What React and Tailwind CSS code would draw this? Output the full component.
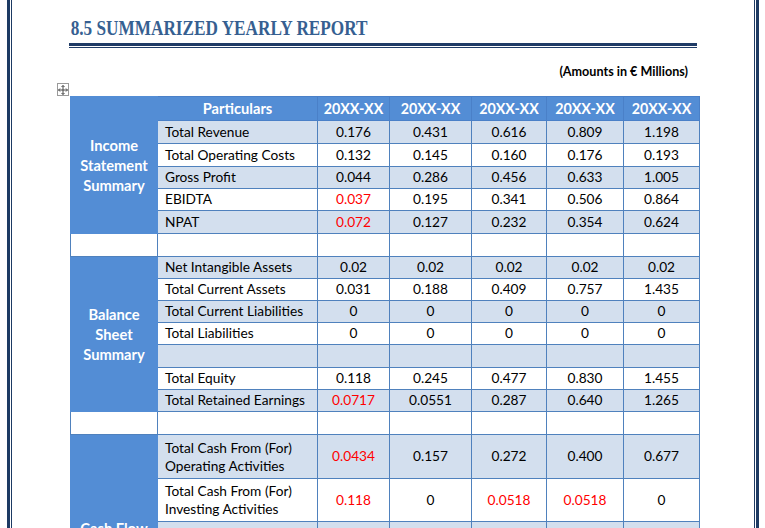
import React from "react";

const income = [
  ["Total Revenue", ["0.176", "0.431", "0.616", "0.809", "1.198"]],
  ["Total Operating Costs", ["0.132", "0.145", "0.160", "0.176", "0.193"]],
  ["Gross Profit", ["0.044", "0.286", "0.456", "0.633", "1.005"]],
  ["EBIDTA", ["!0.037", "0.195", "0.341", "0.506", "0.864"]],
  ["NPAT", ["!0.072", "0.127", "0.232", "0.354", "0.624"]],
];

const balance = [
  ["Net Intangible Assets", ["0.02", "0.02", "0.02", "0.02", "0.02"]],
  ["Total Current Assets", ["0.031", "0.188", "0.409", "0.757", "1.435"]],
  ["Total Current Liabilities", ["0", "0", "0", "0", "0"]],
  ["Total Liabilities", ["0", "0", "0", "0", "0"]],
  ["", ["", "", "", "", ""]],
  ["Total Equity", ["0.118", "0.245", "0.477", "0.830", "1.455"]],
  ["Total Retained Earnings", ["!0.0717", "0.0551", "0.287", "0.640", "1.265"]],
];

const cash = [
  [["Total Cash From (For)", "Operating Activities"], ["!0.0434", "0.157", "0.272", "0.400", "0.677"]],
  [["Total Cash From (For)", "Investing Activities"], ["!0.118", "0", "!0.0518", "!0.0518", "0"]],
  [["Total Cash From (For)", "Financing Activities"], ["0.150", "0", "0", "0", "0"]],
  [["Net Increase (Decrease)", "In Cash"], ["0.0254", "0.157", "0.220", "0.348", "0.677"]],
];

const BD = "border border-[#4f81bd]";

function Val({ v }) {
  const red = v.startsWith("!");
  return (
    <td className={`${BD} text-center ${red ? "text-[#ff0000]" : "text-black"}`}>
      {red ? v.slice(1) : v}
    </td>
  );
}

function Section({ label, rows, h }) {
  return rows.map(([name, vals], i) => (
    <tr key={i} className={`${i % 2 === 0 ? "bg-[#d3dfee]" : "bg-white"}`} style={{ height: h[i] }}>
      {i === 0 && label}
      <td className={`${BD} pl-[7px] pr-1 text-black whitespace-nowrap`}>
        {Array.isArray(name) ? (
          <div className="leading-[18px]">
            <div>{name[0]}</div>
            <div>{name[1]}</div>
          </div>
        ) : (
          name
        )}
      </td>
      {vals.map((v, j) => (
        <Val key={j} v={v} />
      ))}
    </tr>
  ));
}

function EmptyRow() {
  return (
    <tr className="bg-white h-[23px]">
      {Array.from({ length: 7 }).map((_, i) => (
        <td key={i} className={BD}></td>
      ))}
    </tr>
  );
}

function LabelCell({ span, lines, extra = "" }) {
  return (
    <td
      rowSpan={span}
      className={`border border-[#538dd5] bg-[#538dd5] text-white font-bold text-center align-middle leading-[20px] text-[14.7px] ${extra}`}
    >
      {lines.map((l) => (
        <div key={l}>{l}</div>
      ))}
    </td>
  );
}

function MoveIcon() {
  return (
    <div className="w-[12px] h-[13px] border border-[#9a9a9a] bg-white flex items-center justify-center">
      <svg width="10" height="10" viewBox="0 0 10 10" fill="none" stroke="#444" strokeWidth="1">
        <path d="M5 0.5V9.5M0.5 5H9.5" />
        <path d="M3.5 2L5 0.5L6.5 2M3.5 8L5 9.5L6.5 8M2 3.5L0.5 5L2 6.5M8 3.5L9.5 5L8 6.5" />
      </svg>
    </div>
  );
}

export default function App() {
  return (
    <div
      className="w-[765px] h-[528px] overflow-hidden bg-white"
      style={{ fontFamily: "Lato, 'Noto Sans', sans-serif" }}
    >
      <div className="ml-[7px] w-[752px] h-[600px] border-x-[3px] border-[#1d3a63]">
        <div className="mx-[1px] h-full border-x border-[#1d3a63] pl-[57px]">
          <div className="pt-[15px] w-[628px]">
            <div
              className="h-[26px] leading-[26px] pl-[2px] text-[21px] font-bold text-[#365f91] origin-left scale-x-[0.82] whitespace-nowrap"
              style={{ fontFamily: "'Liberation Serif', serif" }}
            >
              8.5 SUMMARIZED YEARLY REPORT
            </div>
            <div className="mt-[2px] h-[3px] bg-[#1f3b66]"></div>
            <div className="mt-[1px] h-[1px] bg-[#1f3b66]"></div>
          </div>
          <div className="w-[619px] mt-[16px] text-right text-[12.6px] font-bold text-black leading-[16px]">
            (Amounts in € Millions)
          </div>
          <div className="flex mt-[3px]">
            <div className="-ml-[12px] w-[13px] pt-0">
              <MoveIcon />
            </div>
            <table className="table-fixed border-collapse w-[629px] text-[13.7px] mt-[13px]">
              <colgroup>
                <col style={{ width: 87 }} />
                <col style={{ width: 160 }} />
                <col style={{ width: 72 }} />
                <col style={{ width: 82 }} />
                <col style={{ width: 75 }} />
                <col style={{ width: 77 }} />
                <col style={{ width: 76 }} />
              </colgroup>
              <tbody>
                <tr className="bg-[#538dd5] h-[24px] text-white font-bold text-[14.3px]">
                  <LabelCell span={6} lines={["Income", "Statement", "Summary"]} />
                  <td className="border border-[#4a80c8] text-center text-[14.7px]">Particulars</td>
                  {["20XX-XX", "20XX-XX", "20XX-XX", "20XX-XX", "20XX-XX"].map((y, i) => (
                    <td key={i} className="border border-[#4a80c8] text-center">
                      {y}
                    </td>
                  ))}
                </tr>
                <Section rows={income} h={[23, 23, 22, 22, 23]} />
                <EmptyRow />
                <Section
                  label={<LabelCell span={7} lines={["Balance", "Sheet", "Summary"]} />}
                  rows={balance}
                  h={[22, 22, 22, 22, 23, 22, 22]}
                />
                <EmptyRow />
                <Section
                  label={<LabelCell span={4} lines={["Cash Flow", "Summary"]} extra="align-top pt-[83px]" />}
                  rows={cash}
                  h={[44, 43, 44, 44]}
                />
              </tbody>
            </table>
          </div>
        </div>
      </div>
    </div>
  );
}
